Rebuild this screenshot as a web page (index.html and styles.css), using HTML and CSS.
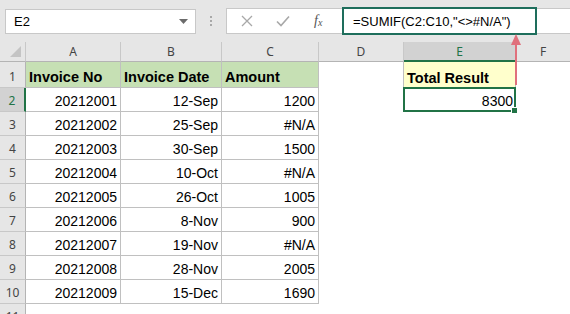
FILE: index.html
```html
<!DOCTYPE html>
<html lang="en">
<head>
  <meta charset="UTF-8">
  <meta name="viewport" content="width=device-width, initial-scale=1.0">
  <title>SUMIF ignoring #N/A</title>
  <link rel="stylesheet" href="styles.css">
</head>
<body>

  <!-- name box + formula bar -->
  <div class="toolbar">
    <div class="name-box">
      <span>E2</span>
      <svg class="caret" width="9" height="5" viewBox="0 0 9 5"><path d="M0 0H9L4.5 5Z" fill="#6b6b6b"/></svg>
    </div>
    <div class="grip"><i></i><i></i><i></i></div>
    <div class="formula-bar">
      <svg class="fb-icon" width="12" height="12" viewBox="0 0 12 12"><path d="M1 1L11 11M11 1L1 11" stroke="#a8a8a8" stroke-width="1.3" fill="none"/></svg>
      <svg class="fb-icon" width="14" height="12" viewBox="0 0 14 12"><path d="M1 6.5L5 10.5L13 1.5" stroke="#a8a8a8" stroke-width="1.6" fill="none"/></svg>
      <span class="fx">f<sub>x</sub></span>
      <div class="formula">=SUMIF(C2:C10,"&lt;&gt;#N/A")</div>
    </div>
  </div>

  <!-- worksheet -->
  <div class="sheet">
    <div class="corner"><span class="corner-tri"></span></div>
    <div class="col-head">A</div>
    <div class="col-head">B</div>
    <div class="col-head">C</div>
    <div class="col-head">D</div>
    <div class="col-head active">E</div>
    <div class="col-head last">F</div>

    <div class="row-head">1</div>
    <div class="cell head">Invoice No</div>
    <div class="cell head">Invoice Date</div>
    <div class="cell head">Amount</div>
    <div class="blank"></div>
    <div class="blank total-label">Total Result<span class="arrow"></span></div>
    <div class="blank"></div>

    <div class="row-head active">2</div>
    <div class="cell num">20212001</div>
    <div class="cell num">12-Sep</div>
    <div class="cell num">1200</div>
    <div class="blank"></div>
    <div class="blank total-value">8300<span class="handle"></span></div>
    <div class="blank"></div>

    <div class="row-head">3</div>
    <div class="cell num">20212002</div>
    <div class="cell num">25-Sep</div>
    <div class="cell num">#N/A</div>
    <div class="blank"></div><div class="blank"></div><div class="blank"></div>

    <div class="row-head">4</div>
    <div class="cell num">20212003</div>
    <div class="cell num">30-Sep</div>
    <div class="cell num">1500</div>
    <div class="blank"></div><div class="blank"></div><div class="blank"></div>

    <div class="row-head">5</div>
    <div class="cell num">20212004</div>
    <div class="cell num">10-Oct</div>
    <div class="cell num">#N/A</div>
    <div class="blank"></div><div class="blank"></div><div class="blank"></div>

    <div class="row-head">6</div>
    <div class="cell num">20212005</div>
    <div class="cell num">26-Oct</div>
    <div class="cell num">1005</div>
    <div class="blank"></div><div class="blank"></div><div class="blank"></div>

    <div class="row-head">7</div>
    <div class="cell num">20212006</div>
    <div class="cell num">8-Nov</div>
    <div class="cell num">900</div>
    <div class="blank"></div><div class="blank"></div><div class="blank"></div>

    <div class="row-head">8</div>
    <div class="cell num">20212007</div>
    <div class="cell num">19-Nov</div>
    <div class="cell num">#N/A</div>
    <div class="blank"></div><div class="blank"></div><div class="blank"></div>

    <div class="row-head">9</div>
    <div class="cell num">20212008</div>
    <div class="cell num">28-Nov</div>
    <div class="cell num">2005</div>
    <div class="blank"></div><div class="blank"></div><div class="blank"></div>

    <div class="row-head">10</div>
    <div class="cell num">20212009</div>
    <div class="cell num">15-Dec</div>
    <div class="cell num">1690</div>
    <div class="blank"></div><div class="blank"></div><div class="blank"></div>

    <div class="row-head">11</div>
  </div>

</body>
</html>
```

FILE: styles.css
```css
:root {
  --chrome: #e6e6e6;
  --chrome-line: #c8c8c8;
  --grid: #c0c0c0;
  --excel-green: #217346;
  --teal: #1e6e5c;
  --head-fill: #c6e0b4;
  --note-fill: #ffffcc;
  --arrow: #e0707c;
}

body {
  margin: 0;
  background: #fff;
  font-family: "Liberation Sans", Arial, sans-serif;
  color: #000;
  overflow: hidden;
}

.toolbar {
  height: 42px;
  background: var(--chrome);
  display: flex;
  align-items: center;
  padding: 0 0 0 5px;
  box-sizing: border-box;
}

.name-box {
  width: 191px;
  height: 25px;
  background: #fff;
  border: 1px solid var(--chrome-line);
  box-sizing: border-box;
  display: flex;
  align-items: center;
  justify-content: space-between;
  padding: 0 7px 0 8px;
  font-size: 13px;
}

.grip {
  width: 30px;
  display: flex;
  flex-direction: column;
  align-items: center;
  gap: 2px;
}

.grip i {
  width: 2px;
  height: 2px;
  background: #a8a8a8;
}

.formula-bar {
  flex: 1;
  height: 26px;
  background: #fff;
  border: 1px solid var(--chrome-line);
  border-right: none;
  box-sizing: border-box;
  display: flex;
  align-items: center;
  padding-left: 14px;
  position: relative;
}

.fb-icon {
  margin-right: 23px;
}

.fb-icon + .fb-icon {
  margin-right: 24px;
}

.fx {
  font-family: "Liberation Serif", "Times New Roman", serif;
  font-style: italic;
  font-size: 14px;
  color: #555;
  width: 28px;
}

.fx sub {
  font-size: 10px;
  vertical-align: -1px;
}

.formula {
  height: 28px;
  margin: -2px 0;
  width: 195px;
  border: 2px solid var(--teal);
  box-sizing: border-box;
  padding-left: 9px;
  display: flex;
  align-items: center;
  font-size: 13px;
  background: #fff;
}

.sheet {
  display: grid;
  grid-template-columns: 26px 95px 101px 97px 85px 112px 1fr;
  grid-template-rows: 20px 26px repeat(9, 24px) 24px;
  position: relative;
}

.corner,
.col-head,
.row-head {
  background: var(--chrome);
  font-family: "Noto Sans", "DejaVu Sans", sans-serif;
  font-size: 12px;
  color: #444;
  box-sizing: border-box;
}

.corner {
  border-right: 1px solid var(--chrome-line);
  border-bottom: 1px solid #b4b4b4;
  position: relative;
}

.corner-tri {
  position: absolute;
  right: 4px;
  bottom: 4px;
  width: 0;
  height: 0;
  border-left: 11px solid transparent;
  border-bottom: 11px solid #c4c4c4;
}

.col-head {
  display: flex;
  align-items: center;
  justify-content: center;
  border-right: 1px solid var(--chrome-line);
  border-bottom: 1px solid #b4b4b4;
}

.col-head.last {
  border-right: none;
}

.col-head.active {
  background: #d2d2d2;
  color: var(--excel-green);
  border-bottom: 2px solid var(--excel-green);
}

.row-head {
  display: flex;
  align-items: flex-end;
  justify-content: center;
  padding-bottom: 2px;
  border-right: 1px solid #b4b4b4;
  border-bottom: 1px solid var(--chrome-line);
  grid-column: 1;
}

.row-head.active {
  background: #d2d2d2;
  color: var(--excel-green);
  border-right: 2px solid var(--excel-green);
}

.cell {
  box-sizing: border-box;
  border-right: 1px solid var(--grid);
  border-bottom: 1px solid var(--grid);
  display: flex;
  align-items: flex-end;
  padding: 0 3px 2px 4px;
  font-size: 14px;
  white-space: nowrap;
}

.cell.head {
  background: var(--head-fill);
  font-weight: bold;
  font-size: 14.5px;
  padding-left: 3px;
}

.cell.num {
  justify-content: flex-end;
}

.blank {
  box-sizing: border-box;
}

.total-label {
  background: var(--note-fill);
  border-left: 1px solid var(--grid);
  border-right: 1px solid var(--grid);
  font-weight: bold;
  font-size: 14.5px;
  display: flex;
  align-items: flex-end;
  padding: 0 0 2px 3px;
  margin-left: -1px;
  position: relative;
}

.total-value {
  border: 2px solid var(--excel-green);
  display: flex;
  align-items: flex-end;
  justify-content: flex-end;
  padding: 0 1px 1px 0;
  font-size: 14px;
  position: relative;
  margin-left: -1px;
  margin-top: -1px;
}

.handle {
  position: absolute;
  right: -4px;
  bottom: -4px;
  width: 5px;
  height: 5px;
  background: var(--excel-green);
  border: 1px solid #fff;
}

/* annotation arrow pointing up to the formula */
.arrow {
  position: absolute;
  right: -2px;
  bottom: 3px;
  width: 2px;
  height: 42px;
  background: var(--arrow);
}

.arrow::before {
  content: "";
  position: absolute;
  top: -9px;
  left: -4px;
  border-left: 5px solid transparent;
  border-right: 5px solid transparent;
  border-bottom: 11px solid var(--arrow);
}
```
